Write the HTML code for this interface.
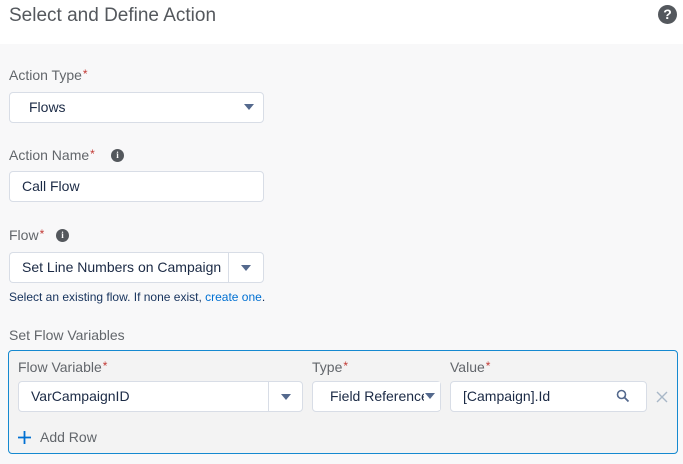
<!DOCTYPE html>
<html><head><meta charset="utf-8"><style>
*{box-sizing:border-box;margin:0;padding:0}
body{width:683px;height:464px;overflow:hidden;background:#f8f8f9;font-family:"Liberation Sans",sans-serif;position:relative;color:#16325c}
.a{position:absolute}
.hdr{left:0;top:0;width:683px;height:44px;background:#fff}
.t{left:9px;top:5px;font-size:19px;color:#54585d}
.lbl{font-size:14px;color:#62666b;white-space:nowrap}
.lbl b{color:#c23934;font-weight:normal;font-size:12px;vertical-align:top;margin-left:1px}
.in{background:#fff;border:1px solid #d8dde6;border-radius:4px;height:31px;font-size:14px;color:#1b2a45;line-height:29px;padding-left:12px;white-space:nowrap;overflow:hidden}
.tri{width:0;height:0;border-left:5px solid transparent;border-right:5px solid transparent;border-top:6px solid #54698d}
.info{width:13px;height:13px;border-radius:50%;background:#54585d;color:#fff;font-size:9px;font-weight:bold;text-align:center;line-height:13px;font-family:"Liberation Serif",serif}
</style></head><body>
<div class="a hdr"></div>
<div class="a t">Select and Define Action</div>
<div class="a" style="left:658px;top:5px;width:19px;height:19px;border-radius:50%;background:#54585d;color:#fff;font-weight:bold;font-size:14px;text-align:center;line-height:19px">?</div>

<div class="a lbl" style="left:9px;top:67px">Action Type<b>*</b></div>
<div class="a in" style="left:9px;top:92px;width:255px;padding-left:19px">Flows</div>
<div class="a tri" style="left:244px;top:104px"></div>

<div class="a lbl" style="left:9px;top:147px">Action Name<b>*</b></div>
<div class="a info" style="left:111px;top:149px">i</div>
<div class="a in" style="left:9px;top:171px;width:255px">Call Flow</div>

<div class="a lbl" style="left:9px;top:227px">Flow<b>*</b></div>
<div class="a info" style="left:56px;top:229px">i</div>
<div class="a" style="left:9px;top:252px;width:220px;height:31px;overflow:hidden;background:#fff;border:1px solid #d8dde6;border-right:none;border-radius:4px 0 0 4px;font-size:14px;color:#1b2a45;line-height:29px;padding-left:12px;white-space:nowrap">Set Line Numbers on Campaign</div>
<div class="a" style="left:228px;top:252px;width:36px;height:31px;background:#fff;border:1px solid #d8dde6;border-radius:0 4px 4px 0"></div>
<div class="a tri" style="left:241px;top:265px"></div>
<div class="a" style="left:9px;top:290px;font-size:12px;color:#16325c;white-space:nowrap">Select an existing flow. If none exist, <span style="color:#0070d2">create one</span>.</div>

<div class="a lbl" style="left:9px;top:327px">Set Flow Variables</div>
<div class="a" style="left:8px;top:350px;width:670px;height:104px;background:#f3f3f3;border:1px solid #1589d0;border-radius:4px"></div>
<div class="a lbl" style="left:18px;top:359px">Flow Variable<b>*</b></div>
<div class="a lbl" style="left:312px;top:359px">Type<b>*</b></div>
<div class="a lbl" style="left:450px;top:359px">Value<b>*</b></div>
<div class="a in" style="left:18px;top:381px;width:285px">VarCampaignID</div>
<div class="a" style="left:268px;top:382px;width:1px;height:29px;background:#d8dde6"></div>
<div class="a tri" style="left:281px;top:394px"></div>
<div class="a in" style="left:312px;top:381px;width:129px;padding-left:17px;padding-right:12px">Field Reference</div>
<div class="a" style="left:424px;top:382px;width:16px;height:28px;background:#fff"></div>
<div class="a tri" style="left:425px;top:393px"></div>
<div class="a in" style="left:450px;top:381px;width:197px">[Campaign].Id</div>
<svg class="a" style="left:616px;top:389px" width="14" height="14" viewBox="0 0 14 14"><circle cx="5.5" cy="5.5" r="4" fill="none" stroke="#54698d" stroke-width="1.6"/><line x1="8.5" y1="8.5" x2="12.5" y2="12.5" stroke="#54698d" stroke-width="1.8"/></svg>
<svg class="a" style="left:656px;top:391px" width="12" height="12" viewBox="0 0 12 12"><path d="M1 1L11 11M11 1L1 11" stroke="#a8b7c7" stroke-width="1.4"/></svg>
<svg class="a" style="left:18px;top:431px" width="13" height="13" viewBox="0 0 13 13"><path d="M6.5 0V13M0 6.5H13" stroke="#0070d2" stroke-width="1.8"/></svg>
<div class="a lbl" style="left:40px;top:429px">Add Row</div>
</body></html>
